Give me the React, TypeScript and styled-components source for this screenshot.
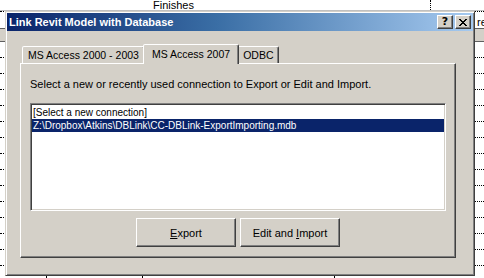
import styled, { createGlobalStyle } from 'styled-components'

const GlobalStyle = createGlobalStyle`
  html, body {
    margin: 0;
    padding: 0;
    background: #ffffff;
    overflow: hidden;
  }
  body {
    font-family: "Liberation Sans", Arial, sans-serif;
    font-size: 11px;
    color: #000000;
  }
`

const Sheet = styled.div`
  position: relative;
  width: 484px;
  height: 278px;
  overflow: hidden;
  background: #ffffff;
  display: flex;
  flex-direction: column;
`

const HeadRow = styled.div`
  height: 11px;
  box-sizing: border-box;
  border-bottom: 1px solid #c0c0c0;
  display: flex;
  font-size: 11px;
  line-height: 10px;
`

const HeadCell = styled.div<{ $w: number }>`
  width: ${p => p.$w}px;
  flex: none;
  padding-left: 153px;
  box-sizing: border-box;
  border-right: 1px dotted #000;
`

const TextRow = styled.div`
  height: 19px;
  box-sizing: border-box;
  border-top: 1px dotted #000;
  display: flex;
  padding: 4px 0 0 477px;
  line-height: 12px;
  font-size: 11px;
  white-space: nowrap;
`

const BandRow = styled.div`
  height: 15px;
  box-sizing: border-box;
  background: #d4d0c8;
  border-top: 1px solid #606060;
  border-bottom: 1px solid #606060;
`

const GridRow = styled.div`
  height: 16px;
  flex: none;
  box-sizing: border-box;
  border-bottom: 1px dotted #000;
`

const FootRow = styled.div`
  height: 12px;
  flex: none;
  display: flex;
  font-size: 11px;
  line-height: 14px;
`

const Tick = styled.div<{ $left: number }>`
  margin-left: ${p => p.$left}px;
  width: 1px;
  background: #000;
`

const FootText = styled.div<{ $left: number }>`
  margin-left: ${p => p.$left}px;
  margin-top: -3px;
  white-space: nowrap;
`

const Dialog = styled.div`
  position: absolute;
  left: 5px;
  top: 11px;
  width: 470px;
  height: 265px;
  box-sizing: border-box;
  background: #d4d0c8;
  border: 1px solid;
  border-color: #d4d0c8 #404040 #404040 #d4d0c8;
  box-shadow: inset 1px 1px #ffffff, inset -1px -1px #808080;
  padding: 1px;
  display: flex;
  flex-direction: column;
`

const TitleBar = styled.div`
  height: 18px;
  flex: none;
  display: flex;
  align-items: center;
  padding: 0 2px 0 2px;
  background: linear-gradient(90deg, #0a246a 0%, #3a6ea5 45%, #a6caf0 100%);
  color: #ffffff;
  font-weight: bold;
  font-size: 11px;
`

const TitleText = styled.div`
  flex: 1;
  white-space: nowrap;
`

const TitleButton = styled.div`
  width: 16px;
  height: 14px;
  box-sizing: border-box;
  margin-left: 2px;
  background: #d4d0c8;
  border: 1px solid;
  border-color: #ffffff #404040 #404040 #ffffff;
  box-shadow: inset -1px -1px #808080;
  display: flex;
  align-items: center;
  justify-content: center;
  color: #000;
  font-family: "DejaVu Sans", sans-serif;
  font-weight: bold;
  font-size: 11px;
  line-height: 12px;
`

const Body = styled.div`
  flex: 1;
  display: flex;
  flex-direction: column;
  padding: 13px 17px 16px 13px;
`

const TabStrip = styled.div`
  display: flex;
  align-items: flex-end;
  padding-left: 2px;
  height: 19px;
  flex: none;
`

const Tab = styled.div<{ $active?: boolean }>`
  position: relative;
  height: ${p => (p.$active ? 20 : 17)}px;
  box-sizing: border-box;
  padding: ${p => (p.$active ? '0 8px 2px' : '0 5px')};
  margin: ${p => (p.$active ? '0 -2px -1px' : '0')};
  z-index: ${p => (p.$active ? 2 : 1)};
  background: #d4d0c8;
  border: 1px solid;
  border-bottom: none;
  border-color: #ffffff #404040 transparent #ffffff;
  border-radius: 2px 2px 0 0;
  box-shadow: inset -1px 0 #808080;
  display: flex;
  align-items: center;
  white-space: nowrap;
  font-size: 10.5px;
`

const Panel = styled.div`
  flex: 1;
  display: flex;
  flex-direction: column;
  box-sizing: border-box;
  border: 1px solid;
  border-color: #ffffff #404040 #404040 #ffffff;
  box-shadow: inset -1px -1px #808080;
  padding: 0 9px;
`

const Prompt = styled.div`
  margin-top: 14px;
  height: 13px;
  line-height: 13px;
  white-space: nowrap;
`

const ListBox = styled.div`
  margin-top: 12px;
  height: 108px;
  flex: none;
  box-sizing: border-box;
  background: #ffffff;
  border: 1px solid;
  border-color: #808080 #ffffff #ffffff #808080;
  box-shadow: inset 1px 1px #404040, inset -1px -1px #d4d0c8;
  padding: 2px 1px 0 1px;
`

const ListItem = styled.div<{ $selected?: boolean }>`
  height: 13px;
  line-height: 13px;
  padding-left: 1px;
  font-size: 10px;
  white-space: nowrap;
  background: ${p => (p.$selected ? '#0a246a' : 'transparent')};
  color: ${p => (p.$selected ? '#ffffff' : '#000000')};
`

const ButtonRow = styled.div`
  margin-top: 7px;
  display: flex;
  justify-content: center;
  gap: 4px;
`

const Button = styled.div`
  width: 100px;
  height: 29px;
  box-sizing: border-box;
  background: #d4d0c8;
  border: 1px solid;
  border-color: #ffffff #404040 #404040 #ffffff;
  box-shadow: inset -1px -1px #808080;
  display: flex;
  align-items: center;
  justify-content: center;
  padding-top: 1px;
`

const CloseGlyph = () => (
  <svg width="8" height="7" viewBox="0 0 8 7" shapeRendering="crispEdges">
    <path
      d="M0 0h2v1h-2zM6 0h2v1h-2zM1 1h2v1h-2zM5 1h2v1h-2zM2 2h4v1h-4zM3 3h2v1h-2zM2 4h4v1h-4zM1 5h2v1h-2zM5 5h2v1h-2zM0 6h2v1h-2zM6 6h2v1h-2z"
      fill="#000"
    />
  </svg>
)

const rows = Array.from({ length: 14 })

const App = () => {
  return (
    <>
      <GlobalStyle />
      <Sheet>
        <HeadRow>
          <HeadCell $w={431}>Finishes</HeadCell>
        </HeadRow>
        <TextRow>re</TextRow>
        <BandRow />
        {rows.map((_, i) => (
          <GridRow key={i} />
        ))}
        <FootRow>
          <Tick $left={46} />
          <Tick $left={95} />
          <Tick $left={191} />
          <FootText $left={94}>TG-M</FootText>
        </FootRow>

        <Dialog>
          <TitleBar>
            <TitleText>Link Revit Model with Database</TitleText>
            <TitleButton>?</TitleButton>
            <TitleButton>
              <CloseGlyph />
            </TitleButton>
          </TitleBar>
          <Body>
            <TabStrip>
              <Tab>MS Access 2000 - 2003</Tab>
              <Tab $active>MS Access 2007</Tab>
              <Tab>ODBC</Tab>
            </TabStrip>
            <Panel>
              <Prompt>Select a new or recently used connection to Export or Edit and Import.</Prompt>
              <ListBox>
                <ListItem>[Select a new connection]</ListItem>
                <ListItem $selected>Z:\Dropbox\Atkins\DBLink\CC-DBLink-ExportImporting.mdb</ListItem>
              </ListBox>
              <ButtonRow>
                <Button>
                  <span>
                    <u>E</u>xport
                  </span>
                </Button>
                <Button>
                  <span>
                    Edit and <u>I</u>mport
                  </span>
                </Button>
              </ButtonRow>
            </Panel>
          </Body>
        </Dialog>
      </Sheet>
    </>
  )
}

export default App
